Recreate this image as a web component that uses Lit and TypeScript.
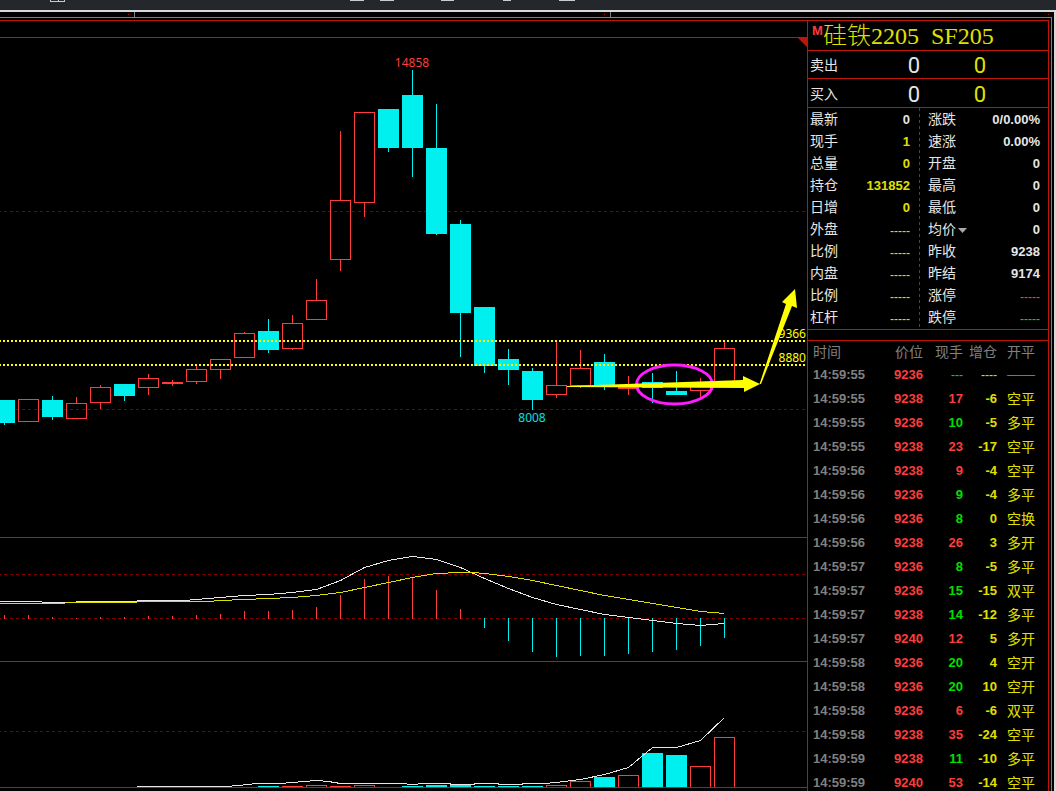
import { LitElement, html, css, svg } from "lit";
import { customElement } from "lit/decorators.js";
import { classMap } from "lit/directives/class-map.js";

type Tone = "up" | "down";
// tone, high, body top, body bottom, low
type Candle = [Tone, number, number, number, number];

const STEP = 24;
const FIRST_X = 4;
const cx = (i: number) => FIRST_X + i * STEP;

const CANDLES: Candle[] = [
  ["down", 400, 400, 423, 425],
  ["up", 399, 399, 422, 422],
  ["down", 396, 400, 417, 420],
  ["up", 397, 403, 419, 419],
  ["up", 385, 387, 403, 409],
  ["down", 384, 384, 396, 401],
  ["up", 374, 378, 388, 395],
  ["up", 380, 382, 384, 386],
  ["up", 366, 369, 382, 384],
  ["up", 359, 359, 370, 379],
  ["up", 332, 333, 358, 358],
  ["down", 319, 331, 350, 353],
  ["up", 315, 323, 349, 350],
  ["up", 279, 300, 320, 320],
  ["up", 131, 200, 260, 271],
  ["up", 112, 112, 203, 217],
  ["down", 109, 109, 148, 152],
  ["down", 70, 95, 148, 177],
  ["down", 104, 148, 234, 235],
  ["down", 220, 224, 313, 357],
  ["down", 307, 307, 366, 373],
  ["down", 349, 359, 370, 385],
  ["down", 368, 371, 400, 410],
  ["up", 342, 385, 395, 398],
  ["up", 350, 368, 386, 388],
  ["down", 354, 362, 387, 390],
  ["up", 376, 387, 389, 395],
  ["down", 373, 382, 388, 403],
  ["down", 371, 391, 395, 395],
  ["up", 378, 385, 391, 398],
  ["up", 342, 348, 385, 385],
];

const MACD_ZERO = 618;
const MACD = [
  615, 615, 617, 618, 617, 617, 616, 616, 615, 614, 611, 611, 610, 607, 595,
  579, 576, 578, 590, 609, 628, 641, 652, 657, 656, 656, 654, 652, 650, 646, 638,
];

const DIFF =
  "-1,601 41,601 42,602 64,602 88,601 136,601 137,600 184,600 196,599 220,597 244,595 268,594 292,592 316,589 340,580 364,567 388,560 412,556 436,559 460,567 484,578 508,588 532,597 556,604 580,609 604,614 628,617 652,620 676,623 700,625 724,623";
const DEA =
  "-1,603 64,603 65,602 136,602 137,601 207,601 220,600 244,599 268,598 292,597 316,595 340,592 364,587 388,582 412,577 436,573 460,572 472,572 484,573 508,576 532,580 556,585 580,590 604,595 628,599 652,603 676,607 700,611 724,613";

const VOL_BASE = 787;
const VOLUME: [number, Tone, number][] = [
  [11, "down", 786], [12, "up", 786], [13, "up", 785], [14, "up", 786],
  [15, "up", 785], [17, "down", 786], [18, "down", 785], [19, "down", 785],
  [20, "down", 786], [21, "down", 786], [22, "down", 786], [23, "up", 785],
  [24, "up", 781], [25, "down", 777], [26, "up", 775], [27, "down", 753],
  [28, "down", 755], [29, "up", 766], [30, "up", 737],
];
const INTEREST =
  "136,786 225,786 238,785 256,783 280,783 292,782 316,780 328,781 340,783 400,783 412,784 424,783 448,783 452,784 472,784 476,783 496,783 500,784 520,784 524,783 544,783 556,782 580,779 604,774 628,767 652,747 676,747 700,740 724,717";

interface Quote {
  label: string;
  value: string;
  tone: string;
  menu?: boolean;
}
const q = (label: string, value: string, tone: string, menu = false): Quote => ({ label, value, tone, menu });

const LEFT: Quote[] = [
  q("最新", "0", "white"), q("现手", "1", "yellow"), q("总量", "0", "yellow"),
  q("持仓", "131852", "yellow"), q("日增", "0", "yellow"), q("外盘", "-----", "yellow"),
  q("比例", "-----", "yellow"), q("内盘", "-----", "yellow"), q("比例", "-----", "yellow"),
  q("杠杆", "-----", "yellow"),
];
const RIGHT: Quote[] = [
  q("涨跌", "0/0.00%", "white"), q("速涨", "0.00%", "white"), q("开盘", "0", "white"),
  q("最高", "0", "white"), q("最低", "0", "white"), q("均价", "0", "white", true),
  q("昨收", "9238", "white"), q("昨结", "9174", "white"), q("涨停", "-----", "red"),
  q("跌停", "-----", "green"),
];

const TICKS: [string, string, string, string, string, string][] = [
  ["14:59:55", "9236", "---", "green", "----", "──"],
  ["14:59:55", "9238", "17", "red", "-6", "空平"],
  ["14:59:55", "9236", "10", "green", "-5", "多平"],
  ["14:59:55", "9238", "23", "red", "-17", "空平"],
  ["14:59:56", "9238", "9", "red", "-4", "空平"],
  ["14:59:56", "9236", "9", "green", "-4", "多平"],
  ["14:59:56", "9236", "8", "green", "0", "空换"],
  ["14:59:56", "9238", "26", "red", "3", "多开"],
  ["14:59:57", "9236", "8", "green", "-5", "多平"],
  ["14:59:57", "9236", "15", "green", "-15", "双平"],
  ["14:59:57", "9238", "14", "green", "-12", "多平"],
  ["14:59:57", "9240", "12", "red", "5", "多开"],
  ["14:59:58", "9236", "20", "green", "4", "空开"],
  ["14:59:58", "9236", "20", "green", "10", "空开"],
  ["14:59:58", "9236", "6", "red", "-6", "双平"],
  ["14:59:58", "9238", "35", "red", "-24", "空平"],
  ["14:59:59", "9238", "11", "green", "-10", "多平"],
  ["14:59:59", "9240", "53", "red", "-14", "空平"],
];

const bar = (tone: Tone, x: number, top: number, bottom: number) =>
  tone === "down" || bottom - top < 3
    ? svg`<rect class="fill-${tone}" x=${x - 10} y=${top} width="21" height=${bottom - top} />`
    : svg`<rect class="hollow" x=${x - 9.5} y=${top + 0.5} width="20" height=${bottom - top - 1} />`;

const grid = (y: number) => svg`<line class="grid" x1="-2" x2="100%" y1=${y + 0.5} y2=${y + 0.5} />`;

@customElement("market-chart")
class MarketChart extends LitElement {
  static styles = css`
    :host { display: flex; flex-direction: column; min-width: 0; }
    svg { display: block; width: 100%; height: 100%; }
    .head { height: 16px; border-bottom: 1px solid #c01408; }
    .panel { border-bottom: 1px solid #c01408; overflow: hidden; box-sizing: border-box; }
    .price { flex: 1; min-height: 0; }
    .macd { height: 124px; }
    .volume { height: 126px; margin-bottom: 3px; }
    .crisp { shape-rendering: crispEdges; }
    .grid { stroke: #800000; stroke-dasharray: 3 3; }
    .level { stroke: #ffff00; stroke-width: 2; stroke-dasharray: 2 2; }
    .fill-up { fill: #ff3c3c; }
    .fill-down { fill: #00f0f0; }
    .hollow { fill: none; stroke: #ff3c3c; }
    .line-white { fill: none; stroke: #e6e6e6; }
    .line-yellow { fill: none; stroke: #e0e000; }
    .arrow { fill: #ffff00; }
    .ring { fill: none; stroke: #ff1cff; stroke-width: 3; }
    .corner { fill: #c01408; }
    text { font: 12px "Noto Sans", sans-serif; }
    .label-up { fill: #ff3c3c; text-anchor: middle; }
    .label-down { fill: #00e0e0; text-anchor: middle; }
    .label-level { fill: #ffff00; text-anchor: end; }
  `;

  private candle([tone, high, top, bottom, low]: Candle, i: number) {
    const x = cx(i);
    return svg`
      ${top > high ? svg`<rect class="fill-${tone}" x=${x} y=${high} width="1" height=${top - high} />` : ""}
      ${low > bottom ? svg`<rect class="fill-${tone}" x=${x} y=${bottom} width="1" height=${low - bottom} />` : ""}
      ${bar(tone, x, top, bottom)}`;
  }

  render() {
    return html`
      <div class="head"></div>
      <div class="panel price">
        <svg role="img" aria-label="K线">
          <svg class="corner" x="100%" overflow="visible"><path d="M-9 0H0V9Z" /></svg>
          <g transform="translate(0,-38)">
            <g class="crisp">
              ${grid(211)} ${grid(409)}
              ${CANDLES.map((c, i) => this.candle(c, i))}
              <line class="level" x1="-1" x2="100%" y1="341" y2="341" />
              <line class="level" x1="-1" x2="100%" y1="365" y2="365" />
            </g>
            <text class="label-up" x="412" y="67">14858</text>
            <text class="label-down" x="532" y="422">8008</text>
            <text class="label-level" x="100%" dx="-1" y="338">9366</text>
            <text class="label-level" x="100%" dx="-1" y="362">8880</text>
            <ellipse class="ring" cx="674.5" cy="384.5" rx="38" ry="19.5" />
            <path class="arrow" d="M567 386L743 380V376L760 384L744 392V388L567 387Z" />
            <path class="arrow" d="M759.5 384L786 304L782 302L795 289L797 308L792 306L761 384Z" />
          </g>
        </svg>
      </div>
      <div class="panel macd">
        <svg class="crisp" role="img" aria-label="MACD">
          <g transform="translate(0,-538)">
            ${grid(574)} ${grid(618)}
            ${MACD.map((v, i) =>
              i < 20
                ? svg`<rect class="fill-up" x=${cx(i)} y=${v} width="1" height=${MACD_ZERO + 1 - v} />`
                : svg`<rect class="fill-down" x=${cx(i)} y=${MACD_ZERO} width="1" height=${v - MACD_ZERO} />`
            )}
            <g transform="translate(0.5,0.5)">
              <polyline class="line-white" points=${DIFF} />
              <polyline class="line-yellow" points=${DEA} />
            </g>
          </g>
        </svg>
      </div>
      <div class="panel volume">
        <svg class="crisp" role="img" aria-label="成交量">
          <g transform="translate(0,-662)">
            ${grid(731)}
            ${VOLUME.map(([i, tone, top]) =>
              tone === "up" && VOL_BASE - top > 1
                ? svg`<path class="hollow" d="M${cx(i) - 9.5} ${VOL_BASE}V${top + 0.5}H${cx(i) + 10.5}V${VOL_BASE}" />`
                : bar(tone, cx(i), top, VOL_BASE)
            )}
            <g transform="translate(0.5,0.5)">
              <polyline class="line-white" points=${INTEREST} />
            </g>
          </g>
        </svg>
      </div>
    `;
  }
}

@customElement("quote-panel")
class QuotePanel extends LitElement {
  static styles = css`
    :host {
      display: block;
      box-sizing: border-box;
      border: solid #c01408;
      border-width: 0 1px;
      overflow: hidden;
      color: #e6e6e6;
      font: 14px "Noto Sans CJK SC", sans-serif;
    }
    h1 {
      display: flex;
      margin: 0;
      padding-left: 4px;
      height: 29px;
      border-bottom: 1px solid #c01408;
      font: 300 24px/30px "Liberation Serif", "Noto Sans CJK SC", serif;
      color: #e0e000;
      white-space: nowrap;
    }
    .mark { width: 11px; font: bold 13px/20px "Liberation Sans", sans-serif; color: #ff3c3c; }
    .code { margin-left: 12px; }
    .deal {
      display: grid;
      grid-template-columns: 70px 40px 66px;
      padding-left: 2px;
      height: 27px;
      line-height: 26px;
      border-bottom: 1px solid #c01408;
    }
    .big { text-align: right; font: 22px/30px Roboto, sans-serif; }
    .buy { height: 28px; line-height: 28px; }
    .buy .big { line-height: 32px; }
    .quotes {
      display: grid;
      grid-template-columns: 112px 1fr;
      padding-bottom: 1px;
      border-bottom: 1px solid #c01408;
    }
    .col { padding: 0 8px; }
    .first {
      padding: 0 10px 0 2px;
      background: repeating-linear-gradient(#c01408 0 3px, transparent 3px 6px) right / 1px 100% no-repeat;
    }
    .row { display: flex; height: 22px; line-height: 20px; }
    .num { margin-left: auto; font: bold 13px/24px "Liberation Sans", sans-serif; }
    .num.dash { font: 12px/26px "Liberation Sans", sans-serif; }
    .white { color: #e6e6e6; }
    .yellow { color: #e0e000; }
    .red { color: #ff3c3c; }
    .green { color: #00e000; }
    .menu { border: 0; padding: 3px 2px 0; background: none; color: #a8a8a8; }
    .menu svg { display: block; fill: currentColor; }
    table {
      width: 100%;
      margin-top: 10px;
      border-top: 1px solid #c01408;
      border-spacing: 0;
      table-layout: fixed;
    }
    th { padding: 0; height: 21px; line-height: 21px; font-weight: 400; color: #808080; text-align: right; white-space: nowrap; }
    td { padding: 2px 0 0; font: bold 13px/22px "Liberation Sans", sans-serif; text-align: right; white-space: nowrap; }
    .time { width: 77px; padding-left: 5px; text-align: left; color: #808080; }
    .cost { width: 33px; }
    .hand { width: 40px; }
    .gain { width: 34px; }
    .kind { padding-left: 10px; text-align: left; }
    td.kind { padding-top: 0; font: 14px/24px "Noto Sans CJK SC", sans-serif; }
    td.dash { font: 12px/22px "Liberation Sans", sans-serif; }
  `;

  private quote(r: Quote) {
    const cls = { num: true, dash: r.value[0] === "-", [r.tone]: true };
    return html`<div class="row">
      <span>${r.label}</span>
      ${r.menu
        ? html`<button class="menu" aria-label="均价"><svg width="9" height="5"><path d="M0 0H9L4.5 5Z" /></svg></button>`
        : ""}
      <span class=${classMap(cls)}>${r.value}</span>
    </div>`;
  }

  render() {
    return html`
      <h1><span class="mark">M</span><span>硅铁2205</span><span class="code">SF205</span></h1>
      <div class="deal"><span>卖出</span><span class="big">0</span><span class="big yellow">0</span></div>
      <div class="deal buy"><span>买入</span><span class="big">0</span><span class="big yellow">0</span></div>
      <div class="quotes">
        <div class="col first">${LEFT.map((r) => this.quote(r))}</div>
        <div class="col">${RIGHT.map((r) => this.quote(r))}</div>
      </div>
      <table>
        <thead>
          <tr>
            <th class="time">时间</th><th class="cost">价位</th><th class="hand">现手</th>
            <th class="gain">增仓</th><th class="kind">开平</th>
          </tr>
        </thead>
        <tbody>
          ${TICKS.map(
            ([time, price, hand, tone, gain, kind]) => html`<tr>
              <td class="time">${time}</td>
              <td class="red">${price}</td>
              <td class=${classMap({ [tone]: true, dash: hand === "---" })}>${hand}</td>
              <td class=${classMap({ yellow: true, dash: gain === "----" })}>${gain}</td>
              <td class="kind yellow">${kind}</td>
            </tr>`
          )}
        </tbody>
      </table>
    `;
  }
}

@customElement("app-root")
class AppRoot extends LitElement {
  static styles = css`
    :host { display: flex; flex-direction: column; height: 100vh; background: #000; overflow: hidden; }
    svg { display: block; width: 100%; height: 100%; shape-rendering: crispEdges; }
    .toolbar { flex: none; height: 10px; background: #24282c; border-bottom: 2px solid #d8d8d8; }
    .frame { flex: 1; min-height: 0; display: flex; flex-direction: column; border-right: 2px solid #d8d8d8; }
    .strip { flex: none; height: 5px; margin-right: 2px; }
    .inner {
      flex: 1;
      min-height: 0;
      display: flex;
      margin-right: 2px;
      padding: 2px 2px 0 0;
      border: solid #808080;
      border-width: 1px 1px 0 0;
    }
    .board {
      flex: 1;
      min-width: 0;
      display: grid;
      grid-template-columns: 1fr 242px;
      grid-template-rows: minmax(0, 1fr);
      border-top: 1px solid #c01408;
    }
    .glyph { fill: #c8ccd0; }
    .tick { fill: #808080; }
    .dot { fill: #c01408; }
  `;

  render() {
    return html`
      <div class="toolbar">
        <svg aria-hidden="true" class="glyph">
          <path d="M50 0h1v1h7v-1h1v1h5v-1h1v2h-15z" />
          <path d="M350 0h14v1h-14zM380 0h14v1h-14zM441 0h13v1h-13zM503 0h8v1h-8zM559 0h16v1h-16z" />
        </svg>
      </div>
      <div class="frame">
        <div class="strip">
          <svg aria-hidden="true">
            <path class="tick" d="M134 0h1v5h-1zM610 0h1v5h-1z" />
            <path class="dot" d="M128 2h1v1h-1zM604 2h1v1h-1zM1048 2h1v1h-1z" />
          </svg>
        </div>
        <div class="inner">
          <div class="board">
            <market-chart></market-chart>
            <quote-panel></quote-panel>
          </div>
        </div>
      </div>
    `;
  }
}
